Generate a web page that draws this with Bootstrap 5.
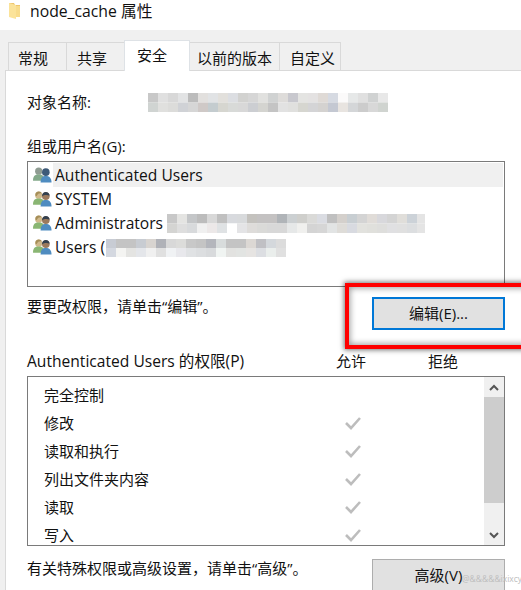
<!DOCTYPE html>
<html lang="zh"><head><meta charset="utf-8">
<link rel="stylesheet" href="https://cdn.jsdelivr.net/npm/bootstrap@5.3.0/dist/css/bootstrap.min.css">
<style>
html,body{height:590px;overflow:hidden}
body{background:#fff;color:#111;font:15px/20px "Open Sans","Noto Sans CJK SC",sans-serif;position:relative}
.lat{font-size:15.6px}
.titlebar{height:30px;padding:0 0 8px 8px;font-size:15.75px;gap:9px}
.dialog{background:#f0f0f0;height:560px;padding:10px 0 0 5px;overflow:hidden}
.tabstrip{height:30px;padding-left:3px;border:0;flex-wrap:nowrap;align-items:flex-end}
.tabstrip .nav-link{height:28px;padding:5px 0 0;text-align:left;background:#f0f0f0;border:1px solid #d9d9d9;border-bottom:0;border-left-width:0;border-radius:0;color:#111;margin:0}
.tabstrip .nav-item:first-child .nav-link{border-left-width:1px}
.tabstrip .nav-link.active{height:31px;background:#fff;border-left-width:1px;padding-top:4px;color:#111;position:relative;z-index:1;margin-bottom:-1px;margin-left:-1px}
.w1{width:59px;padding-left:9px!important}.w2{width:58px;padding-left:10px!important}.w3{width:66px;padding-left:12px!important}.w4{width:90px;padding-left:7px!important}.w5{width:61px;padding-left:10px!important}
.sheet{background:#fff;border-top:1px solid #d9d9d9;border-left:1px solid #d9d9d9;height:520px;padding:0 0 0 21px;overflow:hidden}
.objrow{height:65px;padding-top:21px}
.objrow>span:first-child{width:121px;display:block}
.objrow .mosaic{margin-top:1px}
.cap{height:25px}
.box{width:478px;border:1px solid #7a7a7a;border-radius:0;background:#fff}
.grpbox{height:126px;padding:1px}
.grp{height:24px;padding:0;border:0;gap:1px;background:transparent;color:#111;align-items:center}
.grp .lbl{flex:1;height:24px;line-height:24px;white-space:nowrap;padding-left:2px}
.grp.sel .lbl{background:#f0f0f0}
.grp>svg{margin-left:4px;flex:none}
.m2{margin:3px 0 0 4px}
.m3{margin:4px 0 0 1px}
.editrow{height:43px;width:478px;padding-top:10px}
.editrow>span,.foot>span{margin-top:-1px}
.wbtn{width:133px;border-radius:0;background:#e1e1e1;color:#111;font-size:15px;padding:0;text-align:center}
.edit{height:33px;border:2px solid #0078d7}
.permhead{height:25px;width:478px;margin-top:21px}
.permhead .allow{margin-left:auto;width:30px}
.permhead .deny{width:30px;margin-left:62px;margin-right:47px}
.permbox{height:170px;overflow:hidden}
.perms{flex:1;padding-top:4px}
.perm{height:28px;line-height:28px;padding:0 0 0 16px;border:0;background:transparent;color:#111}
.perm svg{margin-left:auto;margin-right:122px;align-self:center}
.sbar{width:20px;background:#f0f0f0;flex:none}
.arr{height:20px}
.thumb{height:106px;background:#cdcdcd}
.foot{width:478px;height:44px;margin-top:13px}
.adv{height:31px;border:1px solid #adadad;border-bottom:0}
.wm{position:absolute;left:462px;top:573px;font-size:8.5px;color:#bdbdbd;white-space:nowrap;line-height:12px}
.redbox{position:absolute;left:345px;top:283px;width:190px;height:66px;border:4px solid #f00;box-shadow:0 0 5px 1px rgba(0,0,0,.55),inset 0 0 6px 1px rgba(0,0,0,.4);pointer-events:none}
.mosaic{display:block;flex:none}
</style></head><body>
<div class="titlebar d-flex align-items-center">
<svg width="13" height="18" viewBox="0 0 13 18"><path d="M1 1h5l1 2h5v12H1z" fill="#eec56c"/><path d="M1 1l7 2v14l-7-2z" fill="#fbe39a"/><path d="M8 4h4v11H8z" fill="#f8dc8c"/></svg>
<span>node_cache 属性</span></div>
<div class="dialog">
<ul class="nav nav-tabs tabstrip">
<li class="nav-item"><a class="nav-link w1" href="#">常规</a></li>
<li class="nav-item"><a class="nav-link w2" href="#">共享</a></li>
<li class="nav-item"><a class="nav-link active w3" href="#">安全</a></li>
<li class="nav-item"><a class="nav-link w4" href="#">以前的版本</a></li>
<li class="nav-item"><a class="nav-link w5" href="#">自定义</a></li>
</ul>
<div class="sheet">
<div class="objrow d-flex"><span>对象名称:</span><svg class="mosaic" data-m="0" width="240" height="19"></svg></div>
<div class="cap">组或用户名(G):</div>
<div class="box grpbox list-group">
<div class="list-group-item grp sel d-flex"><svg width="19" height="18" viewBox="0 0 20 18"><use href="#u0"/></svg><span class="lbl lat">Authenticated Users</span></div>
<div class="list-group-item grp d-flex"><svg width="19" height="18" viewBox="0 0 20 18"><use href="#u"/></svg><span class="lbl lat">SYSTEM</span></div>
<div class="list-group-item grp d-flex"><svg width="19" height="18" viewBox="0 0 20 18"><use href="#u"/></svg><span class="lbl lat d-flex">Administrators<svg class="mosaic m2" data-m="1" width="258" height="19"></svg></span></div>
<div class="list-group-item grp d-flex"><svg width="19" height="18" viewBox="0 0 20 18"><use href="#u"/></svg><span class="lbl lat d-flex">Users (<svg class="mosaic m3" data-m="2" width="185" height="18"></svg></span></div>
</div>
<div class="editrow d-flex justify-content-between align-items-start"><span>要更改权限，请单击“编辑”。</span><button class="btn wbtn edit">编辑(E)...</button></div>
<div class="permhead d-flex"><span class="lat">Authenticated Users 的权限(P)</span><span class="allow">允许</span><span class="deny">拒绝</span></div>
<div class="box permbox d-flex">
<div class="perms list-group list-group-flush">
<div class="list-group-item perm d-flex">完全控制</div>
<div class="list-group-item perm d-flex">修改<svg width="18" height="14"><use href="#c"/></svg></div>
<div class="list-group-item perm d-flex">读取和执行<svg width="18" height="14"><use href="#c"/></svg></div>
<div class="list-group-item perm d-flex">列出文件夹内容<svg width="18" height="14"><use href="#c"/></svg></div>
<div class="list-group-item perm d-flex">读取<svg width="18" height="14"><use href="#c"/></svg></div>
<div class="list-group-item perm d-flex">写入<svg width="18" height="14"><use href="#c"/></svg></div>
</div>
<div class="sbar d-flex flex-column">
<div class="arr d-flex align-items-center justify-content-center"><svg width="10" height="7"><path d="M1 6l4-4 4 4" fill="none" stroke="#555" stroke-width="2"/></svg></div>
<div class="thumb"></div>
<div class="flex-grow-1"></div>
<div class="arr d-flex align-items-center justify-content-center"><svg width="10" height="7"><path d="M1 1l4 4 4-4" fill="none" stroke="#555" stroke-width="2"/></svg></div>
</div></div>
<div class="foot d-flex justify-content-between align-items-start"><span>有关特殊权限或高级设置，请单击“高级”。</span><button class="btn wbtn adv">高级(V)</button></div>
</div></div>
<div class="redbox"></div>
<div class="wm">@&amp;&amp;&amp;&amp;&amp;ixixcy</div>
<svg width="0" height="0" class="position-absolute"><defs>
<g id="u"><circle cx="6" cy="5" r="3.8" fill="#d0b98c"/><path d="M2.500 5c0-3 2-4 3.500-4 2 0 3 1 3 2-2 0-4 0-5 3z" fill="#a58e58"/><path d="M0 15c0-5 2-6.500 6-6.500s6 1.500 6 6.500z" fill="#8ab673"/><circle cx="13.500" cy="6" r="4" fill="#9c7a5c"/><path d="M9.500 6c0-3 2-4.500 4-4.500s4 1.500 4 4c-2-1-6-1-8 .5z" fill="#33404e"/><path d="M8 17c0-5 2-7 5.500-7s6 2 6 7z" fill="#4f8cc0"/></g>
<g id="u0"><circle cx="6" cy="5" r="3.8" fill="#8f9c92"/><path d="M0 15c0-5 2-6.500 6-6.500s6 1.500 6 6.500z" fill="#83a98a"/><circle cx="13.500" cy="6" r="4" fill="#3d5a78"/><path d="M8 17c0-5 2-7 5.500-7s6 2 6 7z" fill="#4f8cc0"/></g>
<path id="c" d="M2 7l5 5L16 2" fill="none" stroke="#bdbdbd" stroke-width="2.600"/>
</defs></svg>
<script>
var M=[
["c8c8c8 e0e0e0 d8d8d8 e2e3e4 bcbcbc e2e0de e1e3e5 e2e0dc dcdee2 d2d2d0 d6d6d6 e1e1df d0d2d2 dedcda c8c8ce e4e4e2 e4e2e2 dfdad6 d6dae2 fbfafa e6e8e8 e0e0e0 d0d2d2 e8e8e8",
 "d0d4d2 e0e0de dcdcda d0d2d6 d6d6d6 cfc9c7 c4cccf d6d6d0 d8dad8 d8d8d8 ccced2 d4d4d0 c4c4c4 e2e2e2 e0e0de d6d6d0 d4d4d6 d4d2d0 c4c8d2 e8e4e0 d4d6d8 cccccc d8d8d8 d0d4d0"],
["c8c8c8 e4e4e2 c4c6c8 bcbcbc d8d8d8 c0c0c0 d8dade d8dadc c4c2be c4c2c2 c4c2c2 b0b4b8 ccd0d2 cfcfcc dadad8 dadce2 c0c0c0 d4d0cc c8ced2 d4d4d4 e0dcd8 d8d8dc d4d4d4 e0deda ccd2d8 e4e4e4",
 "d4d4d2 dedede d8dadc f0f0f0 ece8e8 dfe2e4 ffffff e4e4e6 dedcda dadad8 d8d8d8 d8d8d8 e6e8e8 f0f0ee d4d4d4 d6d6d6 e2e4e4 dedcd8 d8dae0 e2e2de e0e0dc dededc e0e0e2 e0e0e0 dcdee0 e4e4e4"],
["c8ccd4 c4c4c4 c4c4c4 c8ccd2 d8d4d0 b0b2b8 d8d8d8 dcdcda c8c8c8 c4c4c4 b4b6bc d8dcdc c4c4c4 c4c4c4 dcd8d4 c0c0c4 d4d8dc dcdcdc",
 "d4d8e0 f4f4f2 e4e4e2 e4e6ea f0f0f0 e0e0e0 f0f2f4 e8e8ec e0e2e4 dcdee0 d8dadc f0f4f2 e2e2e0 e2e4e2 e6e4e2 dcdee2 eaeeec e0e0e0"]];
document.querySelectorAll('svg[data-m]').forEach(function(s){
  var d=M[+s.dataset.m],h='',H=+s.getAttribute('height')/2;
  d.forEach(function(r,y){r.split(' ').forEach(function(c,x){
    h+='<rect x="'+x*10+'" y="'+y*H+'" width="10" height="'+H+'" fill="#'+c+'"/>';
  });});
  s.innerHTML=h;
});
</script>
</body></html>
